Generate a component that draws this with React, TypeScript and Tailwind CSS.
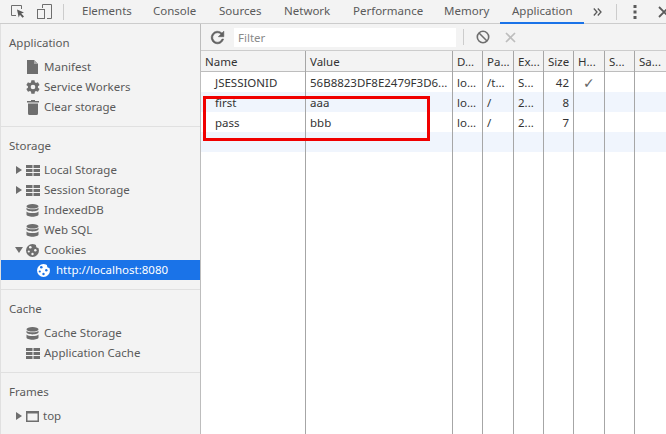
import { ReactNode } from 'react';

const GridIcon = () => (
  <svg width="14" height="11" viewBox="0 0 14 11" className="shrink-0">
    <path d="M0 0h6.500v3H0zM7.500 0H14v3H7.500zM0 4h6.500v3H0zM7.500 4H14v3H7.500zM0 8h6.500v3H0zM7.500 8H14v3H7.500z" fill="#6e6e6e" />
  </svg>
);

const DbIcon = () => (
  <svg width="13" height="13" viewBox="0 0 13 13" className="shrink-0">
    <ellipse cx="6.500" cy="2.300" rx="6" ry="2.300" fill="#6e6e6e" />
    <path d="M.5 3.800v1.500c0 1.200 2.700 2.100 6 2.100s6-.9 6-2.100V3.800c-1 1-3.300 1.500-6 1.500s-5-.5-6-1.500z" fill="#6e6e6e" />
    <path d="M.5 7.600v3c0 1.300 2.700 2.200 6 2.200s6-.9 6-2.200v-3c-1 1-3.300 1.500-6 1.500s-5-.5-6-1.500z" fill="#6e6e6e" />
  </svg>
);

const CookieIcon = ({ fill, hole }: { fill: string; hole: string }) => (
  <svg width="13" height="13" viewBox="0 0 13 13" className="shrink-0">
    <circle cx="6.500" cy="6.500" r="6.500" fill={fill} />
    <circle cx="4.300" cy="3.300" r="1.300" fill={hole} />
    <circle cx="9.300" cy="6.300" r="1.200" fill={hole} />
    <circle cx="2.800" cy="7.500" r="1.100" fill={hole} />
    <circle cx="6.500" cy="10" r="1.200" fill={hole} />
    <circle cx="12.500" cy="1.500" r="2.500" fill={hole} />
  </svg>
);

const ManifestIcon = () => (
  <svg width="11" height="14" viewBox="0 0 11 14" className="shrink-0">
    <path d="M0 0h7l4 4v10H0z" fill="#6e6e6e" />
    <path d="M7 0v4h4z" fill="#a8a8a8" />
  </svg>
);

const GearIcon = () => (
  <svg width="16" height="16" viewBox="0 0 24 24" className="shrink-0">
    <path
      fillRule="evenodd"
      d="M19.400 13c.04-.33.06-.66.06-1s-.02-.67-.06-1l2.100-1.650a.5.500 0 0 0 .12-.64l-2-3.460a.5.500 0 0 0-.61-.22l-2.490 1a7.300 7.300 0 0 0-1.730-1l-.38-2.650A.49.490 0 0 0 13.930 2h-4a.49.490 0 0 0-.49.420l-.38 2.650a7.700 7.700 0 0 0-1.730 1l-2.490-1a.49.490 0 0 0-.61.22l-2 3.460a.49.490 0 0 0 .12.640L4.450 11c-.04.33-.07.67-.07 1s.03.67.07 1l-2.100 1.650a.5.500 0 0 0-.12.640l2 3.460c.12.220.39.300.61.220l2.490-1c.52.400 1.080.730 1.730 1l.38 2.650c.04.240.24.420.49.420h4c.25 0 .45-.18.49-.42l.38-2.650a7.700 7.700 0 0 0 1.730-1l2.490 1c.22.080.49 0 .61-.22l2-3.460a.5.500 0 0 0-.12-.64zM12 15.500a3.500 3.500 0 1 1 0-7 3.500 3.500 0 0 1 0 7z"
      fill="#6e6e6e"
    />
  </svg>
);

const TrashIcon = () => (
  <svg width="12" height="15" viewBox="0 0 12 15" className="shrink-0">
    <path d="M4 0h4v1h4v1.500H0V1h4zM1 3.500h10V13.500a1.500 1.500 0 0 1-1.500 1.500h-7A1.500 1.500 0 0 1 1 13.500z" fill="#6e6e6e" />
  </svg>
);

const FrameIcon = () => (
  <svg width="13" height="11" viewBox="0 0 13 11" className="shrink-0">
    <rect x=".75" y=".75" width="11.500" height="9.500" fill="none" stroke="#6e6e6e" strokeWidth="1.500" />
    <rect x="0" y="0" width="13" height="2.500" fill="#6e6e6e" />
  </svg>
);

const Right = () => <span className="w-0 h-0 border-y-[4.500px] border-y-transparent border-l-[6px] border-l-[#6e6e6e]" />;
const Down = () => <span className="w-0 h-0 border-x-[4.500px] border-x-transparent border-t-[6px] border-t-[#6e6e6e]" />;

function Item({ arrow, icon, label }: { arrow?: ReactNode; icon: ReactNode; label: string }) {
  return (
    <div className="flex items-center h-5 pl-[13px]">
      <span className="w-[9px] flex justify-center shrink-0">{arrow}</span>
      <span className="w-[19px] flex justify-center shrink-0">{icon}</span>
      <span className="ml-[2px] whitespace-nowrap">{label}</span>
    </div>
  );
}

const Heading = ({ children }: { children: ReactNode }) => (
  <div className="h-5 flex items-center pl-[8px] mb-[4px]">{children}</div>
);

const tabs = [
  ['Elements', 'w-[71px]'],
  ['Console', 'w-[66px]'],
  ['Sources', 'w-[65px]'],
  ['Network', 'w-[69px]'],
  ['Performance', 'w-[91px]'],
  ['Memory', 'w-[68px]'],
];

interface Col {
  title: string;
  width: string;
  cells: string[];
  cell: string;
}

const plain = 'pl-1 text-[#333333]';

const cols: Col[] = [
  { title: 'Name', width: 'w-[105px]', cells: ['JSESSIONID', 'first', 'pass'], cell: 'pl-[14px] text-[#333333]' },
  { title: 'Value', width: 'w-[147px]', cells: ['56B8823DF8E2479F3D6...', 'aaa', 'bbb'], cell: plain },
  { title: 'D...', width: 'w-[30px]', cells: ['lo...', 'lo...', 'lo...'], cell: plain },
  { title: 'Pa...', width: 'w-[31px]', cells: ['/t...', '/', '/'], cell: plain },
  { title: 'Ex...', width: 'w-[30px]', cells: ['S...', '2...', '2...'], cell: plain },
  { title: 'Size', width: 'w-[30px]', cells: ['42', '8', '7'], cell: 'justify-end pr-1 text-[#333333]' },
  { title: 'H...', width: 'w-[31px]', cells: ['✓', '', ''], cell: "pl-[9px] text-[14px] text-[#666666] font-['DejaVu_Sans',sans-serif]" },
  { title: 'S...', width: 'w-[30px]', cells: ['', '', ''], cell: plain },
  { title: 'Sa...', width: 'w-[31px]', cells: ['', '', ''], cell: plain },
];

export default function App() {
  return (
    <div className="w-[666px] h-[434px] overflow-hidden flex flex-col bg-white text-[11.5px] text-[#5a5a5a] font-['Noto_Sans','Open_Sans',sans-serif]">
      {/* tab bar */}
      <div className="h-6 shrink-0 flex bg-[#f3f3f3] border-b border-[#cccccc] items-stretch">
        <div className="w-[70px] flex items-center shrink-0 pl-[10px]">
          <svg width="16" height="15" viewBox="0 0 16 15">
            <path d="M6 11.500H1.500V1.500h10V5" fill="none" stroke="#6e6e6e" strokeWidth="1" />
            <path d="M7 5.500l7 3-2.800 1 2.800 3-1.500 1.300-2.600-3-1.200 2.700z" fill="#5a5a5a" />
          </svg>
          <svg width="16" height="15" viewBox="0 0 16 15" className="ml-[11px]">
            <path d="M5.500 4V.5h9v14H10" fill="none" stroke="#6e6e6e" />
            <rect x=".5" y="5.500" width="7" height="9" fill="none" stroke="#6e6e6e" />
          </svg>
          <div className="ml-[10px] w-px h-4 bg-[#cccccc]" />
        </div>
        {tabs.map(([t, w]) => (
          <div key={t} className={`${w} shrink-0 flex items-center pl-3 pb-[2px] whitespace-nowrap`}>{t}</div>
        ))}
        <div className="w-[84px] shrink-0 flex items-center pl-3 border-b-2 border-[#1a73e8] -mb-px">Application</div>
        <div className="w-[32px] shrink-0 flex items-center pl-[9px]">
          <svg width="9" height="8" viewBox="0 0 9 8">
            <path d="M.8.5L4 4 .8 7.500M4.800.5L8 4 4.800 7.500" fill="none" stroke="#5a5a5a" strokeWidth="1.300" />
          </svg>
        </div>
        <div className="flex items-center">
          <div className="w-px h-4 bg-[#cccccc]" />
          <svg width="4" height="14" viewBox="0 0 4 14" className="ml-[16px] shrink-0">
            <path d="M.5 0h3v3h-3zM.5 5.500h3v3h-3zM.5 11h3v3h-3z" fill="#5a5a5a" />
          </svg>
          <svg width="12" height="12" viewBox="0 0 12 12" className="ml-[21px] shrink-0">
            <path d="M1 1l10 10M11 1L1 11" stroke="#5a5a5a" strokeWidth="1.800" />
          </svg>
        </div>
      </div>

      <div className="flex-1 flex min-h-0">
        {/* sidebar */}
        <div className="w-[201px] shrink-0 bg-[#f3f3f3] border-r border-l border-r-[#bdbdbd] border-l-[#e0e0e0] pt-[9px] flex flex-col">
          <Heading>Application</Heading>
          <Item icon={<ManifestIcon />} label="Manifest" />
          <Item icon={<GearIcon />} label="Service Workers" />
          <Item icon={<TrashIcon />} label="Clear storage" />
          <div className="h-px bg-[#e0e0e0] mt-[9px] mb-[9px]" />
          <Heading>Storage</Heading>
          <Item arrow={<Right />} icon={<GridIcon />} label="Local Storage" />
          <Item arrow={<Right />} icon={<GridIcon />} label="Session Storage" />
          <Item icon={<DbIcon />} label="IndexedDB" />
          <Item icon={<DbIcon />} label="Web SQL" />
          <Item arrow={<Down />} icon={<CookieIcon fill="#6e6e6e" hole="#f3f3f3" />} label="Cookies" />
          <div className="flex items-center h-5 pl-[36px] bg-[#1a73e8] text-white">
            <CookieIcon fill="#ffffff" hole="#1a73e8" />
            <span className="ml-[6px]">http://localhost:8080</span>
          </div>
          <div className="h-px bg-[#e0e0e0] mt-[9px] mb-[9px]" />
          <Heading>Cache</Heading>
          <Item icon={<DbIcon />} label="Cache Storage" />
          <Item icon={<GridIcon />} label="Application Cache" />
          <div className="h-px bg-[#e0e0e0] mt-[9px] mb-[9px]" />
          <Heading>Frames</Heading>
          <div className="flex items-center h-5 pl-[13px]">
            <span className="w-[9px] flex justify-center shrink-0"><Right /></span>
            <span className="ml-[3px] shrink-0"><FrameIcon /></span>
            <span className="ml-[4px]">top</span>
          </div>
        </div>

        {/* main */}
        <div className="flex-1 min-w-0 relative flex flex-col">
          <div className="h-[27px] shrink-0 flex items-center bg-[#f3f3f3] border-b border-[#cccccc]">
            <svg width="19" height="19" viewBox="0 0 24 24" className="ml-[7px] shrink-0">
              <path d="M17.650 6.350A8 8 0 1 0 19.740 14h-2.100a6 6 0 1 1-1.410-6.240L13 11h7V4z" fill="#5f5f5f" stroke="#5f5f5f" strokeWidth="0.700" />
            </svg>
            <div className="ml-[7px] w-[222px] h-[19px] bg-white flex items-center pl-1 pt-[2px] text-[#8a8a8a]">Filter</div>
            <div className="ml-[7px] w-px h-4 bg-[#cccccc]" />
            <svg width="14" height="14" viewBox="0 0 14 14" className="ml-[12px] shrink-0">
              <circle cx="7" cy="7" r="5.700" fill="none" stroke="#6e6e6e" strokeWidth="1.600" />
              <path d="M3 3l8 8" stroke="#6e6e6e" strokeWidth="1.600" />
            </svg>
            <svg width="11" height="11" viewBox="0 0 11 11" className="ml-[15px] shrink-0">
              <path d="M1 1l9 9M10 1l-9 9" stroke="#bdbdbd" strokeWidth="1.700" />
            </svg>
          </div>
          <div className="flex-1 flex min-h-0">
            {cols.map((c) => (
              <div key={c.title} className={`${c.width} shrink-0 flex flex-col border-r border-[#a6a6a6] last:border-r-0`}>
                <div className="h-[21px] shrink-0 flex items-center px-1 pt-[2px] bg-[#f3f3f3] border-b border-[#bdbdbd] whitespace-nowrap overflow-hidden text-[#333333]">
                  {c.title}
                </div>
                {[...c.cells, ''].map((v, i) => (
                  <div
                    key={i}
                    className={`h-5 shrink-0 flex items-center pt-[2px] whitespace-nowrap overflow-hidden ${i % 2 ? 'bg-[#f0f5fd]' : 'bg-white'} ${c.cell}`}
                  >
                    {v}
                  </div>
                ))}
              </div>
            ))}
          </div>
          {/* annotation */}
          <div className="absolute left-[2px] top-[72px] w-[227px] h-[45px] border-[3px] border-[#f00000] pointer-events-none" />
        </div>
      </div>
    </div>
  );
}
